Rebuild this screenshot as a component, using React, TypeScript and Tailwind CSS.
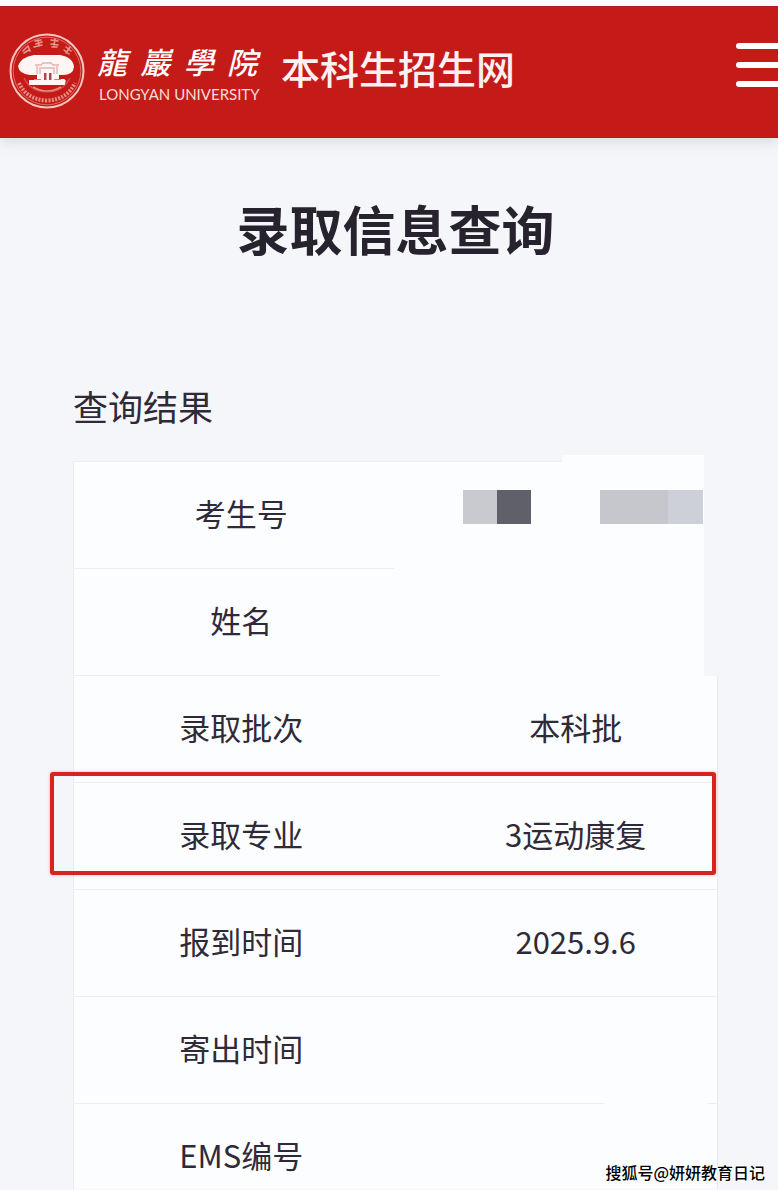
import { clsx } from "clsx";

type Row = {
  label: string;
  value?: string;
  masked?: boolean;
};

const ROWS: Row[] = [
  { label: "考生号", masked: true },
  { label: "姓名" },
  { label: "录取批次", value: "本科批" },
  { label: "录取专业", value: "3运动康复" },
  { label: "报到时间", value: "2025.9.6" },
  { label: "寄出时间" },
  { label: "EMS编号" },
];

// University seal: double ring, arc lettering, domed hall in the middle
function Seal() {
  return (
    <svg className="h-[76px] w-[76px] shrink-0" viewBox="0 0 76 76" fill="none" aria-hidden="true">
      <circle cx="38" cy="38" r="36.5" stroke="#fbc5be" strokeWidth="2" />
      <circle cx="38" cy="38" r="33.8" stroke="#dc6d65" strokeWidth="1" />
      {/* upper marks */}
      <g stroke="#ee958d" strokeWidth="1.6" strokeLinecap="round">
        <path d="M14 18l4-4M15 20l5-3M19 13l2 5" />
        <path d="M26 8l6-1M27 11l6-2M29 7l1 6M25 14l8-2" />
        <path d="M42 7l7 1M42 11l7 1M46 6l-1 7M43 14l5 0" />
        <path d="M57 14l5 4M55 17l5 4M61 14l-4 6" />
      </g>
      {/* canopy */}
      <path
        d="M25 22H51Q64 24 65 34Q64 42 54 42H50V46H55Q58 47 56 50L57 52H20V47H28V42H21Q10 41 9 33Q12 24 25 22Z"
        fill="#fff6f3"
      />
      <path d="M26 32h6l2-2h8l2 2h6M28 33v8M31 34v7M48 33v8M45 34v7M32 35h12" stroke="#dfb5b2" strokeWidth="1.4" />
      <path d="M35 40h2.5v7H35zM40 40h2.5v7H40z" fill="#a84a50" />
      <path d="M25 46.500h7M45 46.500h7" stroke="#dc7a75" strokeWidth="1" />
      <path d="M15 45Q22 59 38 59Q54 59 61 45" stroke="#d9574f" strokeWidth="1.2" />
      <path d="M24 54Q38 62 52 54" stroke="#e98d85" strokeWidth="1.6" />
      {/* lower lettering ring */}
      <path
        d="M10 50Q18 67 38 67.500Q58 67 66 50"
        stroke="#e88b83"
        strokeWidth="4"
        strokeDasharray="2 1.300"
      />
    </svg>
  );
}

function MaskedNumber() {
  return (
    <div className="flex h-[34px]">
      <span className="w-[34px] bg-[#c8cad0]" />
      <span className="w-[34px] bg-[#5f606a]" />
      <span className="ml-[69px] w-[68px] bg-[#c6c6cd]" />
      <span className="w-[35px] bg-[#ced0d9]" />
    </div>
  );
}

function Header() {
  return (
    <header className="flex h-[132px] items-center overflow-hidden border-y border-[#a9201d] bg-[#c41b19] pb-[2px] pl-[9px] text-white shadow-[0_2px_14px_rgba(80,90,110,0.22)]">
      <a href="#" className="flex shrink-0 items-center">
        <Seal />
        <span className="ml-3 flex w-[160px] flex-col gap-[2px]">
          <span className="flex justify-between font-['Noto_Sans_CJK_TC',sans-serif] text-[30px] leading-[44px] font-medium italic">
            <span>龍</span>
            <span>巖</span>
            <span>學</span>
            <span>院</span>
          </span>
          <span className="pl-[2px] font-['Lato',sans-serif] text-[15px] leading-[18px] whitespace-nowrap text-[#fbdcd8]">
            LONGYAN UNIVERSITY
          </span>
        </span>
        <span className="ml-6 pb-2 text-[39px] leading-[48px] font-medium whitespace-nowrap text-[#fff1f3]">
          本科生招生网
        </span>
      </a>
      <button type="button" aria-label="菜单" className="ml-auto flex w-[42px] shrink-0 flex-col gap-[13px] pb-3">
        <span className="h-[6px] w-full rounded-l-full bg-white" />
        <span className="h-[6px] w-full rounded-l-full bg-white" />
        <span className="h-[6px] w-full rounded-l-full bg-white" />
      </button>
    </header>
  );
}

export default function App() {
  return (
    <div className="relative min-h-screen overflow-hidden bg-[#f5f6fa] pt-[6px] font-['Noto_Sans_CJK_SC',sans-serif] text-[#2f2938]">
      <div className="absolute inset-x-0 top-0 h-[6px] bg-[#fafbfe]" />
      <Header />

      <main className="pr-[60px] pl-[73px]">
        <h1 className="pt-[58px] text-center text-[53px] leading-[64px] font-bold text-[#27232e]">录取信息查询</h1>
        <h2 className="mt-[122px] text-[35px] leading-[48px]">查询结果</h2>

        <div className="relative mt-[31px]">
          <table className="w-full table-fixed border-separate border-spacing-0 border-x border-[#e9eaef] bg-[#fcfdfe] text-[31px] leading-[48px]">
            <tbody>
              {ROWS.map((row, i) => {
                const pad = i === ROWS.length - 1 ? "pt-[27px] pb-[10px]" : "pt-[27px] pb-[31px]";
                return (
                  <tr key={row.label}>
                    <th scope="row" className={clsx("w-[52%] border-t border-[#eceef2] font-normal", pad)}>
                      {row.label}
                    </th>
                    <td
                      className={clsx(
                        "border-t border-[#eceef2]",
                        row.masked ? "pt-[28px] pl-[55px] align-top" : clsx("pl-[26px] text-center", pad)
                      )}
                    >
                      {row.masked ? <MaskedNumber /> : row.value}
                    </td>
                  </tr>
                );
              })}
            </tbody>
          </table>

          {/* blanked out areas */}
          <div className="absolute -top-[6px] right-[14px] h-[30px] w-[142px] bg-[#fcfdfe]" />
          <div className="absolute top-[80px] right-[14px] h-[120px] w-[310px] bg-[#fcfdfe]" />
          <div className="absolute top-[200px] right-[2px] h-[30px] w-[276px] bg-[#fcfdfe]" />
          <div className="absolute -top-[6px] right-0 h-[221px] w-[14px] bg-[#f5f6fa]" />
          <div className="absolute top-[630px] right-[10px] h-[24px] w-[104px] bg-[#fcfdfe]" />

          {/* highlighted major */}
          <div className="absolute top-[311px] right-[2px] -left-[23px] h-[103px] rounded-[3px] border-[4px] border-[#d8231f] shadow-[0_0_3px_#f5a9a3]" />
        </div>
      </main>

      <p className="absolute right-[13px] bottom-[6px] text-[16px] leading-6 font-medium text-black [text-shadow:1px_1px_0_#fff,-1px_-1px_0_#fff,1px_-1px_0_#fff,-1px_1px_0_#fff]">
        搜狐号@妍妍教育日记
      </p>
    </div>
  );
}
